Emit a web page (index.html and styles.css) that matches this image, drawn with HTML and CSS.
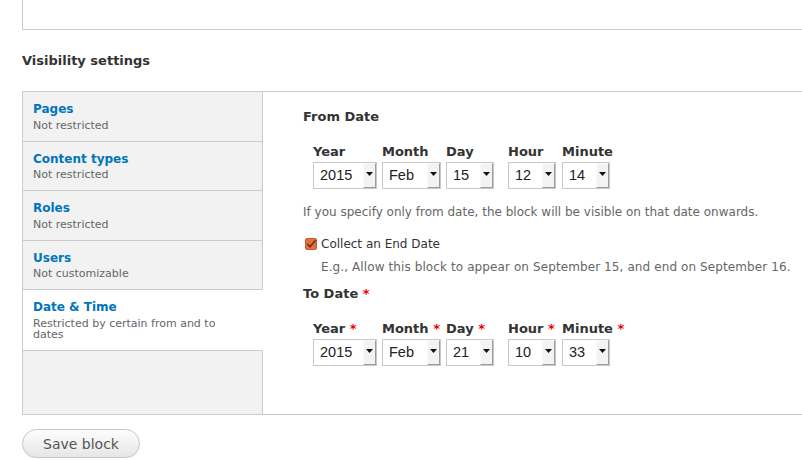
FILE: index.html
```html
<!DOCTYPE html>
<html>
<head>
<meta charset="utf-8">
<link rel="stylesheet" href="styles.css">
</head>
<body>
<div class="page">
  <div class="top-box"></div>
  <h2 class="section-title">Visibility settings</h2>
  <div class="vtabs">
    <ul class="tab-list">
      <li class="tab"><a class="tab-title" href="#">Pages</a><span class="tab-summary">Not restricted</span></li>
      <li class="tab"><a class="tab-title" href="#">Content types</a><span class="tab-summary">Not restricted</span></li>
      <li class="tab"><a class="tab-title" href="#">Roles</a><span class="tab-summary">Not restricted</span></li>
      <li class="tab"><a class="tab-title" href="#">Users</a><span class="tab-summary">Not customizable</span></li>
      <li class="tab is-selected"><a class="tab-title" href="#">Date &amp; Time</a><span class="tab-summary">Restricted by certain from and to dates</span></li>
      <li class="tab-filler"></li>
    </ul>
    <div class="tab-pane">
      <h3 class="field-title">From Date</h3>
      <div class="datetime">
        <div class="dt-group date-group">
          <div class="dt-field"><label class="dt-label">Year</label><div class="select w-year"><span class="select-value">2015</span><span class="select-btn"><svg width="7" height="5" viewBox="0 0 7 5"><path d="M0 0H7L3.5 4Z" fill="#111"/></svg></span></div></div>
          <div class="dt-field"><label class="dt-label">Month</label><div class="select w-month"><span class="select-value">Feb</span><span class="select-btn"><svg width="7" height="5" viewBox="0 0 7 5"><path d="M0 0H7L3.5 4Z" fill="#111"/></svg></span></div></div>
          <div class="dt-field"><label class="dt-label">Day</label><div class="select w-small"><span class="select-value">15</span><span class="select-btn"><svg width="7" height="5" viewBox="0 0 7 5"><path d="M0 0H7L3.5 4Z" fill="#111"/></svg></span></div></div>
        </div>
        <div class="dt-group time-group">
          <div class="dt-field"><label class="dt-label">Hour</label><div class="select w-small"><span class="select-value">12</span><span class="select-btn"><svg width="7" height="5" viewBox="0 0 7 5"><path d="M0 0H7L3.5 4Z" fill="#111"/></svg></span></div></div>
          <div class="dt-field"><label class="dt-label">Minute</label><div class="select w-small"><span class="select-value">14</span><span class="select-btn"><svg width="7" height="5" viewBox="0 0 7 5"><path d="M0 0H7L3.5 4Z" fill="#111"/></svg></span></div></div>
        </div>
      </div>
      <p class="help help-first">If you specify only from date, the block will be visible on that date onwards.</p>
      <div class="checkbox-row">
        <svg class="checkbox" width="12" height="12" viewBox="0 0 12 12"><rect x="0.5" y="0.5" width="11" height="11" rx="1.5" fill="#e4703f" stroke="#c9592c"/><path d="M2.3 5.8L5 8.8L10.5 2.2" fill="none" stroke="#6e3118" stroke-width="1.6"/></svg>
        <label class="checkbox-label">Collect an End Date</label>
      </div>
      <p class="help help-indent">E.g., Allow this block to appear on September 15, and end on September 16.</p>
      <h3 class="field-title to-date">To Date <span class="req">*</span></h3>
      <div class="datetime">
        <div class="dt-group date-group">
          <div class="dt-field"><label class="dt-label">Year <span class="req">*</span></label><div class="select w-year"><span class="select-value">2015</span><span class="select-btn"><svg width="7" height="5" viewBox="0 0 7 5"><path d="M0 0H7L3.5 4Z" fill="#111"/></svg></span></div></div>
          <div class="dt-field"><label class="dt-label">Month <span class="req">*</span></label><div class="select w-month"><span class="select-value">Feb</span><span class="select-btn"><svg width="7" height="5" viewBox="0 0 7 5"><path d="M0 0H7L3.5 4Z" fill="#111"/></svg></span></div></div>
          <div class="dt-field"><label class="dt-label">Day <span class="req">*</span></label><div class="select w-small"><span class="select-value">21</span><span class="select-btn"><svg width="7" height="5" viewBox="0 0 7 5"><path d="M0 0H7L3.5 4Z" fill="#111"/></svg></span></div></div>
        </div>
        <div class="dt-group time-group">
          <div class="dt-field"><label class="dt-label">Hour <span class="req">*</span></label><div class="select w-small"><span class="select-value">10</span><span class="select-btn"><svg width="7" height="5" viewBox="0 0 7 5"><path d="M0 0H7L3.5 4Z" fill="#111"/></svg></span></div></div>
          <div class="dt-field"><label class="dt-label">Minute <span class="req">*</span></label><div class="select w-small"><span class="select-value">33</span><span class="select-btn"><svg width="7" height="5" viewBox="0 0 7 5"><path d="M0 0H7L3.5 4Z" fill="#111"/></svg></span></div></div>
        </div>
      </div>
    </div>
  </div>
  <button class="btn" type="button">Save block</button>
</div>
</body>
</html>
```

FILE: styles.css
```css
html, body {
  margin: 0;
  padding: 0;
  overflow: hidden;
  background: #fff;
}
body {
  font-family: "DejaVu Sans", Verdana, sans-serif;
  font-size: 13px;
  color: #333;
}
.page {
  margin-left: 22px;
  width: 900px;
}
.top-box {
  height: 29px;
  border: 1px solid #cccccc;
  border-top: 0;
}
.section-title {
  font-size: 13px;
  font-weight: bold;
  line-height: 20px;
  margin: 21px 0 20px;
  color: #333;
}
.vtabs {
  display: flex;
  border: 1px solid #cccccc;
  height: 322px;
}
.tab-list {
  list-style: none;
  margin: 0;
  padding: 0;
  width: 240px;
  flex: none;
  display: flex;
  flex-direction: column;
  background: #f2f2f2;
}
.tab {
  display: flex;
  flex-direction: column;
  padding: 8px 10px 10px;
  border-right: 1px solid #cccccc;
  border-bottom: 1px solid #cccccc;
}
.tab.is-selected {
  background: #fff;
  border-right-color: #fff;
}
.tab-filler {
  flex: 1;
  border-right: 1px solid #cccccc;
}
.tab-title {
  font-size: 12px;
  font-weight: bold;
  line-height: 18px;
  color: #0074bd;
  text-decoration: none;
}
.tab-summary {
  font-size: 11px;
  line-height: 11px;
  margin-top: 1.5px;
  color: #666;
  padding-right: 20px;
}
.tab-pane {
  flex: 1;
  padding: 16px 20px 0 40px;
}
.field-title {
  margin: 0;
  font-size: 13px;
  font-weight: bold;
  line-height: 18px;
  color: #333;
}
.to-date {
  margin-top: 9px;
}
.req {
  color: #e00;
}
.datetime {
  display: flex;
  gap: 14px;
  margin-top: 17px;
  padding-left: 10px;
}
.dt-group {
  display: flex;
}
.date-group {
  gap: 5px;
}
.time-group {
  gap: 6px;
}
.dt-field {
  display: flex;
  flex-direction: column;
}
.dt-label {
  font-size: 13px;
  font-weight: bold;
  line-height: 18px;
  margin-bottom: 1px;
  white-space: nowrap;
  color: #333;
}
.select {
  box-sizing: border-box;
  height: 27px;
  border: 1px solid #c8c8c8;
  display: flex;
  align-items: stretch;
  justify-content: space-between;
  background: #fff;
}
.w-year { width: 64px; }
.w-month { width: 59px; }
.w-small { width: 48px; }
.select-value {
  font-family: "Liberation Sans", Arial, sans-serif;
  font-size: 14.5px;
  line-height: 25px;
  color: #222;
  padding-left: 6px;
}
.select-btn {
  box-sizing: border-box;
  width: 13px;
  background: #f3f3f3;
  border-left: 1px solid #fafafa;
  border-top: 1px solid #fafafa;
  border-right: 1px solid #9c9c9c;
  border-bottom: 1px solid #9c9c9c;
  display: flex;
  align-items: center;
  justify-content: center;
  padding-bottom: 2px;
}
.help {
  margin: 0;
  font-size: 12px;
  line-height: 18px;
  color: #666;
}
.help-first {
  margin-top: 13.5px;
}
.checkbox-row {
  display: flex;
  align-items: center;
  margin-top: 14.3px;
  height: 18px;
  padding-left: 2px;
}
.checkbox {
  flex: none;
  margin-right: 4px;
}
.checkbox-label {
  font-size: 12px;
  line-height: 18px;
  color: #333;
}
.help-indent {
  margin-top: 5px;
  padding-left: 18px;
  letter-spacing: 0.1px;
}
.btn {
  margin-top: 14px;
  width: 118px;
  height: 29px;
  box-sizing: border-box;
  border: 1px solid #c6c6c6;
  border-radius: 15px;
  background: linear-gradient(#fdfdfd, #e6e6e6);
  font-family: "DejaVu Sans", Verdana, sans-serif;
  font-size: 14px;
  color: #555;
  padding: 0;
  box-shadow: 0 1px 1px rgba(0,0,0,0.08);
}
```
